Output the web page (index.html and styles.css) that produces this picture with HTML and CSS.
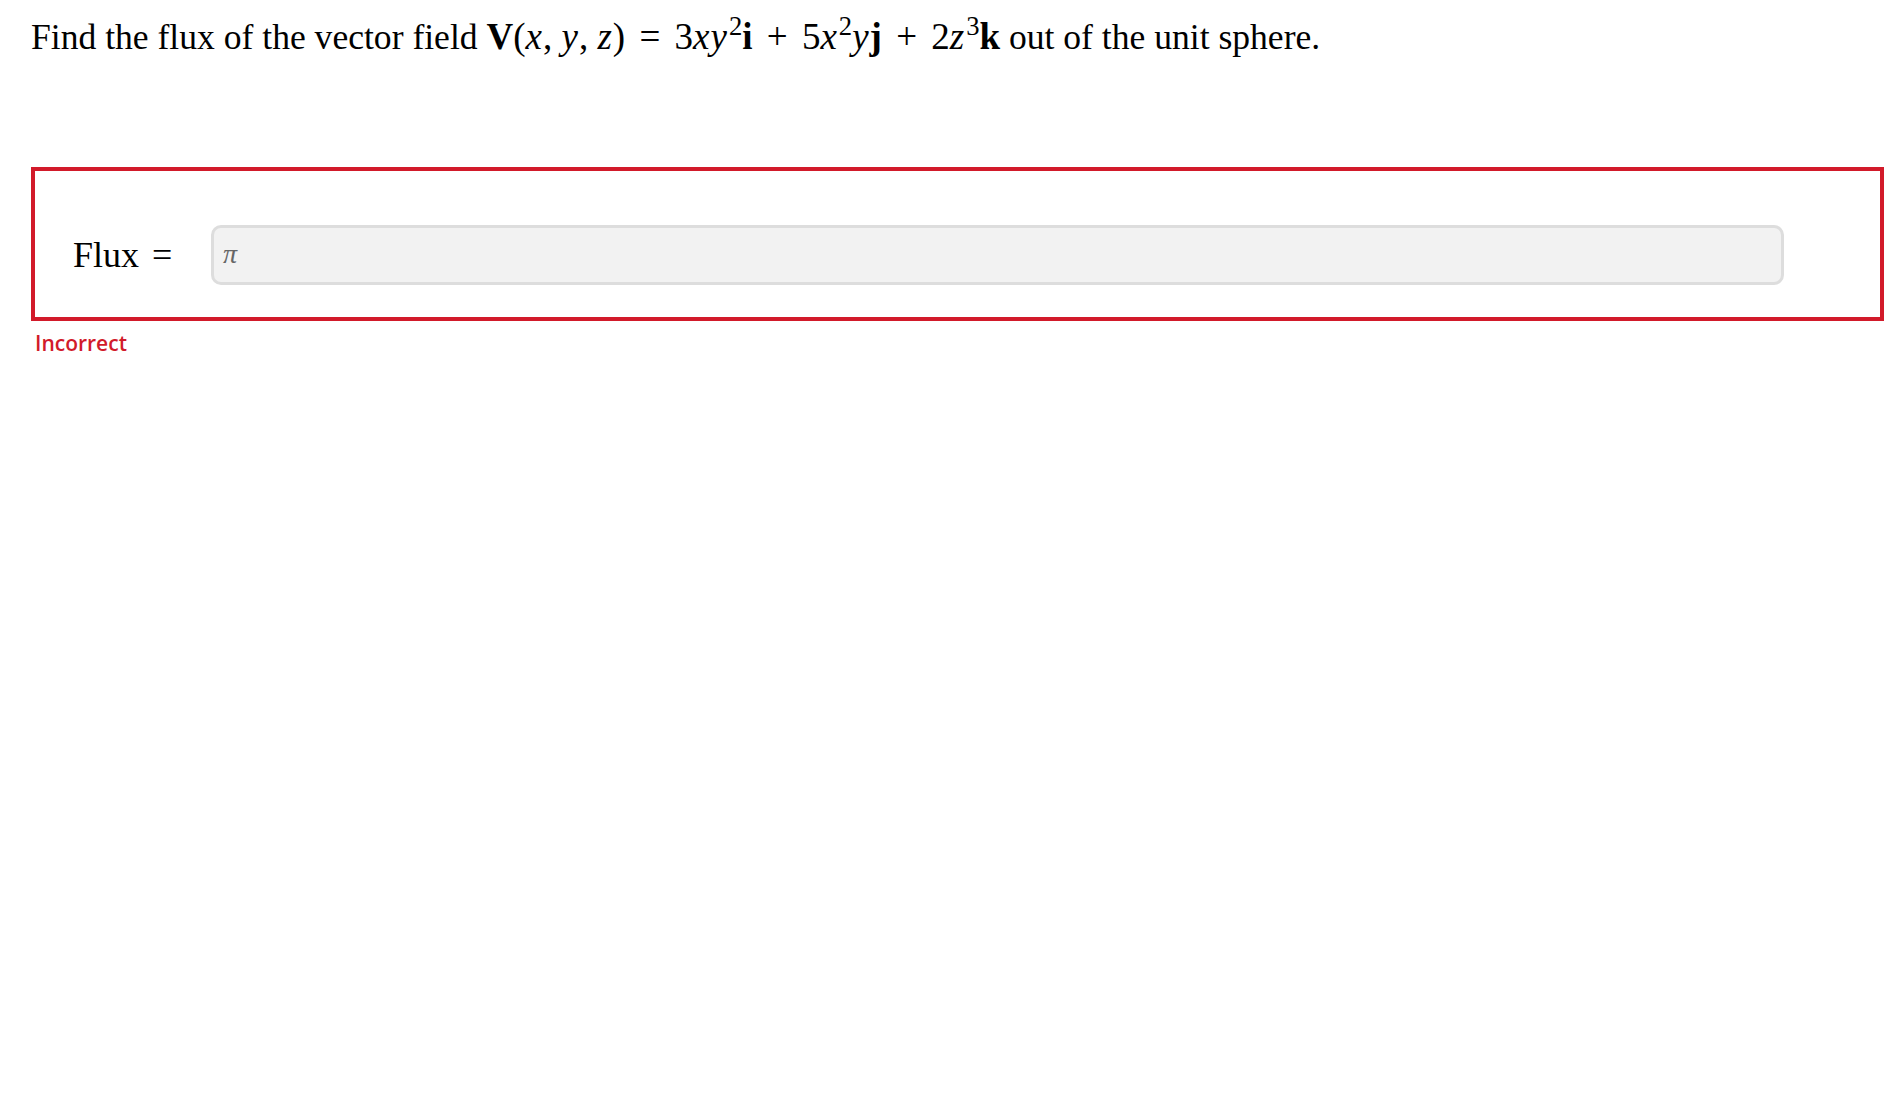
FILE: index.html
```html
<!DOCTYPE html>
<html>
<head>
<meta charset="utf-8">
<link rel="stylesheet" href="styles.css">
</head>
<body>
<div class="page">
  <p class="question">Find the flux of the vector field <span class="math"><b>V</b>(<i>x</i>, <i>y</i>, <i>z</i>) <span class="op">=</span> 3<i>x</i><i>y</i><sup>2</sup><b>i</b> <span class="op">+</span> 5<i>x</i><sup>2</sup><i>y</i><b>j</b> <span class="op">+</span> 2<i>z</i><sup>3</sup><b>k</b></span> out of the unit sphere.</p>
  <div class="answer-box">
    <span class="label">Flux <span class="eq">=</span></span>
    <div class="input"><i class="pi">π</i></div>
  </div>
  <div class="feedback">Incorrect</div>
</div>
</body>
</html>
```

FILE: styles.css
```css
html, body {
  margin: 0;
  padding: 0;
  background: #ffffff;
}
.page {
  padding: 16px 6px 0 31px;
  font-family: "Liberation Serif", "Times New Roman", serif;
  color: #000;
}
.question {
  margin: 0;
  font-size: 35.6px;
  line-height: 42px;
}
.math {
  font-size: 37px;
}
.math i {
  padding-right: 1px;
}
.math sup {
  font-size: 0.72em;
  line-height: 0;
  vertical-align: 0.52em;
  margin-left: 1px;
}
.math .op {
  padding: 0 5px;
}
.answer-box {
  margin-top: 109px;
  border: 4px solid #d21a2a;
  padding: 54px 96px 32px 38px;
  display: flex;
  align-items: center;
}
.label {
  font-size: 36px;
  line-height: 40px;
  width: 138px;
  flex: 0 0 auto;
  white-space: nowrap;
}
.eq {
  padding-left: 4px;
}
.input {
  flex: 1;
  height: 51px;
  border: 3px solid #dddddd;
  border-radius: 10px;
  background: #f2f2f2;
  display: flex;
  align-items: center;
  padding-left: 9px;
  padding-bottom: 3px;
}
.pi {
  font-family: "Liberation Serif", "Times New Roman", serif;
  font-size: 28px;
  color: #666666;
}
.feedback {
  margin-top: 7px;
  margin-left: 4px;
  font-family: "Open Sans", "Liberation Sans", sans-serif;
  font-weight: 600;
  font-size: 21px;
  line-height: 30px;
  color: #d21a2a;
}
```
